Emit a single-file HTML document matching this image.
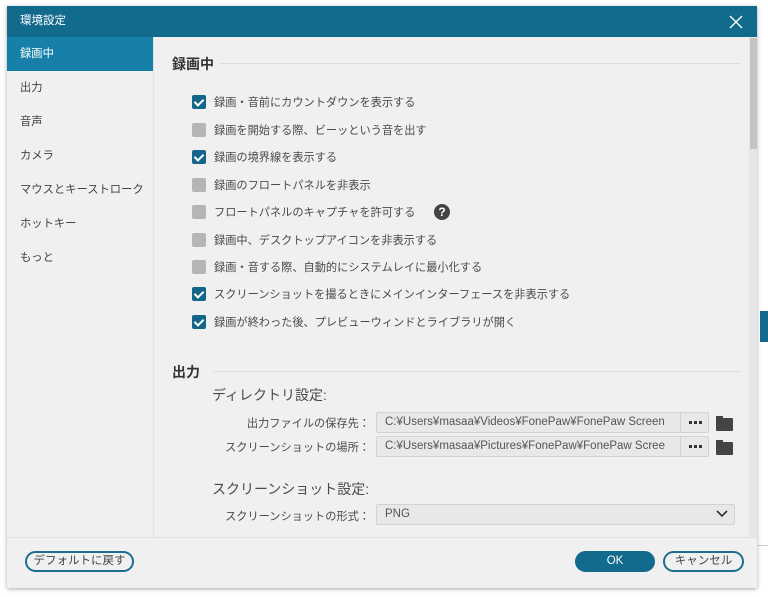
<!DOCTYPE html>
<html><head><meta charset="utf-8"><style>
*{margin:0;padding:0;box-sizing:border-box}
body{width:768px;height:597px;background:#fff;position:relative;overflow:hidden;font-family:"Liberation Sans","Noto Sans CJK JP",sans-serif;color:#4a4a4a;font-size:12px}
.a{position:absolute}
.win{left:7px;top:6px;width:750px;height:582px;background:#f0f0f0;box-shadow:0 1px 4px rgba(0,0,0,.35)}
.title{left:0;top:0;width:750px;height:31px;background:#126a8c;color:#fff;font-size:11.5px;line-height:31px;padding-left:13px}
.side{left:0;top:31px;width:147px;height:500px;border-right:1px solid #e2e2e2}
.si{position:absolute;left:0;width:146px;height:34px;line-height:34px;padding-left:13px;font-size:11.3px;color:#444}
.sel{background:#1680a8;color:#fff}
.cb{position:absolute;width:14px;height:14px;background:#b5b5b5;border-radius:2px}
.cb.on{background:#15648a}
.cb.on:after{content:"";position:absolute;left:4px;top:1.5px;width:4px;height:7px;border:solid #fff;border-width:0 2px 2px 0;transform:rotate(45deg)}
.lbl{position:absolute;font-size:11.2px;color:#4a4a4a;white-space:nowrap}
.hd{position:absolute;font-size:14px;font-weight:bold;color:#333}
.hl{position:absolute;height:1px;background:#dcdcdc}
.inp{position:absolute;height:21px;border:1px solid #d2d2d2;background:#e8e8e8;border-radius:2px;font-size:11.5px;line-height:19px;padding-left:8px;color:#555;white-space:nowrap;overflow:hidden}
.dots{position:absolute;right:0;top:0;width:28px;height:19px;border-left:1px solid #d2d2d2;background:#e8e8e8}
.dots i{position:absolute;top:8px;width:3px;height:3px;background:#333}
.fold{position:absolute;width:17px;height:13px;background:#444;border-radius:1px}
.fold:before{content:"";position:absolute;left:0;top:-2px;width:7px;height:3px;background:#444}
.btn{position:absolute;height:21px;border:2px solid #1c6d8e;border-radius:11px;text-align:center;line-height:17px;font-size:11.5px;color:#444}
</style></head><body>
<div class="a" style="left:760px;top:311px;width:8px;height:31px;background:#126a8c"></div>
<div class="a" style="left:758px;top:545px;width:10px;height:1px;background:#ccc"></div>
<div class="a win">
<div class="a title">環境設定</div>
<svg class="a" style="left:722px;top:9px" width="14" height="14"><path d="M1 1L13 13M13 1L1 13" stroke="#fff" stroke-width="1.3"/></svg>
<div class="a side">
<div class="si sel" style="top:0">録画中</div>
<div class="si" style="top:34px">出力</div>
<div class="si" style="top:68px">音声</div>
<div class="si" style="top:102px">カメラ</div>
<div class="si" style="top:136px">マウスとキーストローク</div>
<div class="si" style="top:170px">ホットキー</div>
<div class="si" style="top:204px">もっと</div>
</div>
<div class="a" style="left:742px;top:31px;width:8px;height:500px;background:#e6e6e6"></div>
<div class="a" style="left:743px;top:32px;width:7px;height:111px;background:#c4c4c4"></div>
<div class="hd" style="left:165px;top:48px">録画中</div>
<div class="hl" style="left:213px;top:57px;width:520px"></div>
<div class="cb on" style="left:185px;top:89px"></div><div class="lbl" style="left:207px;top:88px">録画・音前にカウントダウンを表示する</div>
<div class="cb" style="left:185px;top:117px"></div><div class="lbl" style="left:207px;top:116px">録画を開始する際、ビーッという音を出す</div>
<div class="cb on" style="left:185px;top:144px"></div><div class="lbl" style="left:207px;top:143px">録画の境界線を表示する</div>
<div class="cb" style="left:185px;top:172px"></div><div class="lbl" style="left:207px;top:171px">録画のフロートパネルを非表示</div>
<div class="cb" style="left:185px;top:199px"></div><div class="lbl" style="left:207px;top:198px">フロートパネルのキャプチャを許可する</div>
<div class="a" style="left:427px;top:198px;width:16px;height:16px;border-radius:50%;background:#444;color:#fff;font-weight:bold;font-size:12px;text-align:center;line-height:16px">?</div>
<div class="cb" style="left:185px;top:227px"></div><div class="lbl" style="left:207px;top:226px">録画中、デスクトップアイコンを非表示する</div>
<div class="cb" style="left:185px;top:254px"></div><div class="lbl" style="left:207px;top:253px">録画・音する際、自動的にシステムレイに最小化する</div>
<div class="cb on" style="left:185px;top:281px"></div><div class="lbl" style="left:207px;top:280px">スクリーンショットを撮るときにメインインターフェースを非表示する</div>
<div class="cb on" style="left:185px;top:309px"></div><div class="lbl" style="left:207px;top:308px">録画が終わった後、プレビューウィンドとライブラリが開く</div>
<div class="hd" style="left:165px;top:356px">出力</div>
<div class="hl" style="left:206px;top:365px;width:527px"></div>
<div class="lbl" style="left:205px;top:379px;font-size:14px">ディレクトリ設定:</div>
<div class="lbl" style="left:200px;top:409px;width:163px;text-align:right">出力ファイルの保存先：</div>
<div class="inp" style="left:369px;top:406px;width:333px">C:¥Users¥masaa¥Videos¥FonePaw¥FonePaw Screen<div class="dots"><i style="left:8px"></i><i style="left:13px"></i><i style="left:18px"></i></div></div>
<div class="fold" style="left:709px;top:412px"></div>
<div class="lbl" style="left:200px;top:433px;width:163px;text-align:right">スクリーンショットの場所：</div>
<div class="inp" style="left:369px;top:430px;width:333px">C:¥Users¥masaa¥Pictures¥FonePaw¥FonePaw Scree<div class="dots"><i style="left:8px"></i><i style="left:13px"></i><i style="left:18px"></i></div></div>
<div class="fold" style="left:709px;top:436px"></div>
<div class="lbl" style="left:205px;top:473px;font-size:14px">スクリーンショット設定:</div>
<div class="lbl" style="left:200px;top:502px;width:163px;text-align:right">スクリーンショットの形式：</div>
<div class="inp" style="left:369px;top:498px;width:359px">PNG</div>
<svg class="a" style="left:709px;top:504px" width="12" height="8"><path d="M1 1L6 6L11 1" stroke="#333" stroke-width="1.6" fill="none"/></svg>
<div class="hl" style="left:0;top:531px;width:750px;background:#e2e2e2"></div>
<div class="btn" style="left:18px;top:545px;width:109px">デフォルトに戻す</div>
<div class="btn" style="left:568px;top:545px;width:80px;background:#126a8c;color:#fff;border-color:#126a8c">OK</div>
<div class="btn" style="left:656px;top:545px;width:81px">キャンセル</div>
</div>
</body></html>
